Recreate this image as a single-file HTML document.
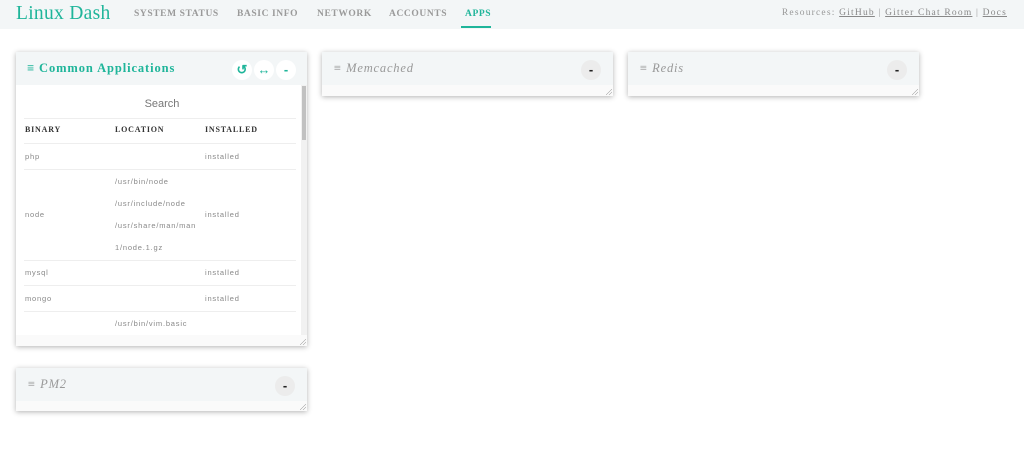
<!DOCTYPE html>
<html><head><style>
*{box-sizing:border-box;margin:0;padding:0}
body{width:1024px;height:459px;background:#fff;font-family:"Liberation Serif",serif;position:relative;overflow:hidden}
.hdr{position:absolute;left:0;top:0;width:1024px;height:29px;background:#f3f6f7}
.logo{position:absolute;left:16px;top:3px;font-size:19.5px;color:#1fb59a;letter-spacing:.3px;font-family:"Liberation Serif",serif}
.nav{position:absolute;top:9px;font-size:9.5px;letter-spacing:.6px;color:#9a9a9a;font-weight:bold}
.res{position:absolute;right:17px;top:8px;font-size:9.5px;letter-spacing:1.2px;color:#999}
.res u{color:#888}
.card{position:absolute;background:#fafafa;box-shadow:0 1px 5px rgba(0,0,0,.3)}
.ch{position:absolute;left:0;top:0;right:0;height:33px;background:#f3f6f7}
.ct{position:absolute;left:11px;top:9px;font-size:12.5px;font-style:italic;color:#999;letter-spacing:.8px}
.btn{position:absolute;top:8px;width:20px;height:20px;border-radius:50%;background:#ececec;color:#222;font-size:13px;text-align:center;line-height:19px;font-weight:bold;font-family:"Liberation Sans",sans-serif}
.wb{background:#fff;color:#1fb59a}
.grip{position:absolute;right:1px;bottom:1px;width:6px;height:6px;background:linear-gradient(135deg,transparent 45%,#999 50%,transparent 55%,transparent 70%,#999 75%,transparent 80%)}
.body{position:absolute;left:0;top:33px;width:285px;height:250px;background:#fff;overflow:hidden;font-family:"Liberation Sans",sans-serif}
.t{position:absolute;font-size:7.5px;color:#888;letter-spacing:.8px}
.th{position:absolute;font-family:"Liberation Serif",serif;font-weight:bold;font-size:8px;color:#333;letter-spacing:.8px}
.ln{position:absolute;left:8px;width:272px;height:1px;background:#eee}
</style></head><body>
<div class="hdr">
<div class="logo">Linux Dash</div>
<div class="nav" style="left:134px">SYSTEM STATUS</div>
<div class="nav" style="left:237px">BASIC INFO</div>
<div class="nav" style="left:317px">NETWORK</div>
<div class="nav" style="left:389px">ACCOUNTS</div>
<div class="nav" style="left:465px;color:#1fb59a;font-weight:bold">APPS</div>
<div style="position:absolute;left:461px;top:26px;width:30px;height:2px;background:#1fb59a"></div>
<div class="res">Resources: <u>GitHub</u> | <u>Gitter Chat Room</u> | <u>Docs</u></div>
</div>

<div class="card" style="left:16px;top:52px;width:291px;height:294px">
<div class="ch"><div class="ct" style="font-style:normal;color:#1fb59a;font-weight:bold;letter-spacing:.9px">≡ Common Applications</div>
<div class="btn wb" style="left:216px">↺</div><div class="btn wb" style="left:238px">↔</div><div class="btn wb" style="left:260px">-</div></div>
<div class="body">
<div class="t" style="left:0;width:292px;text-align:center;top:13px;font-size:11px;color:#777;letter-spacing:0">Search</div>
<div class="ln" style="top:33px"></div>
<div class="th" style="left:9px;top:40px">BINARY</div><div class="th" style="left:99px;top:40px">LOCATION</div><div class="th" style="left:189px;top:40px">INSTALLED</div>
<div class="ln" style="top:58px"></div>
<div class="t" style="left:9px;top:67px">php</div><div class="t" style="left:189px;top:67px">installed</div>
<div class="ln" style="top:84px"></div>
<div class="t" style="left:99px;top:92px">/usr/bin/node</div>
<div class="t" style="left:99px;top:114px">/usr/include/node</div>
<div class="t" style="left:9px;top:125px">node</div><div class="t" style="left:189px;top:125px">installed</div>
<div class="t" style="left:99px;top:136px">/usr/share/man/man</div>
<div class="t" style="left:99px;top:158px">1/node.1.gz</div>
<div class="ln" style="top:175px"></div>
<div class="t" style="left:9px;top:183px">mysql</div><div class="t" style="left:189px;top:183px">installed</div>
<div class="ln" style="top:200px"></div>
<div class="t" style="left:9px;top:209px">mongo</div><div class="t" style="left:189px;top:209px">installed</div>
<div class="ln" style="top:226px"></div>
<div class="t" style="left:99px;top:234px">/usr/bin/vim.basic</div>
</div>
<div style="position:absolute;left:285px;top:33px;width:6px;height:250px;background:#f1f1f1"><div style="margin:1px;height:54px;background:#c1c1c1"></div></div>
<div class="grip"></div>
</div>

<div class="card" style="left:322px;top:52px;width:291px;height:44px"><div class="ch"><div class="ct">≡ Memcached</div><div class="btn" style="left:259px">-</div></div><div class="grip"></div></div>
<div class="card" style="left:628px;top:52px;width:291px;height:44px"><div class="ch"><div class="ct">≡ Redis</div><div class="btn" style="left:259px">-</div></div><div class="grip"></div></div>
<div class="card" style="left:16px;top:368px;width:291px;height:43px"><div class="ch"><div class="ct">≡ PM2</div><div class="btn" style="left:259px">-</div></div><div class="grip"></div></div>
</body></html>
